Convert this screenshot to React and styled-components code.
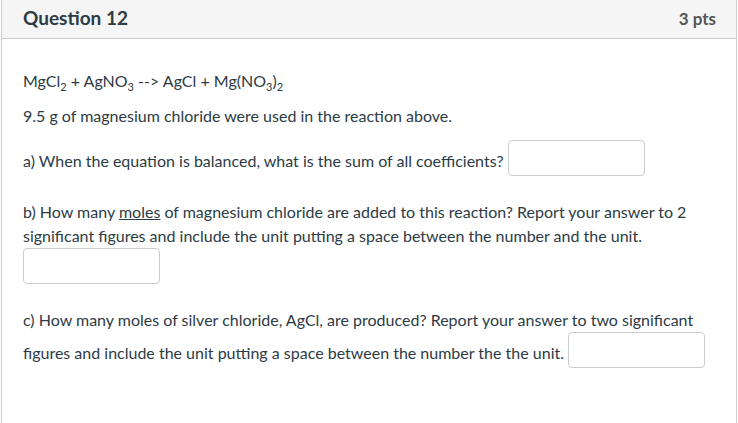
import React from "react";
import styled, { createGlobalStyle } from "styled-components";

const GlobalStyle = createGlobalStyle`
  body {
    margin: 0;
    background: #ffffff;
    font-family: Lato, "Open Sans", sans-serif;
    color: #2d3b45;
  }
`;

const Card = styled.div`
  margin-left: 1px;
  width: 734px;
  min-height: 440px;
  border: 1px solid #c7cdd1;
  border-top: none;
  box-sizing: content-box;
`;

const Header = styled.div`
  display: flex;
  align-items: center;
  justify-content: space-between;
  height: 38px;
  padding: 0 20px 0 21px;
  background: #f5f5f5;
  border-bottom: 1px solid #c7cdd1;
`;

const Title = styled.div`
  font-size: 19px;
  font-weight: 700;
  color: #2d3b45;
  margin-top: -3px;
`;

const Points = styled.div`
  font-size: 17px;
  font-weight: 700;
  color: #555555;
  margin-top: -2px;
`;

const Body = styled.div`
  padding: 30px 21px 0 21px;
  font-size: 16px;
`;

const Line = styled.p`
  margin: 0 0 ${(p) => p.$gap || 0}px 0;
  line-height: 24px;
`;

const Sub = styled.sub`
  font-size: 11px;
  line-height: 0;
  vertical-align: -4px;
`;

const Answer = styled.span`
  display: ${(p) => (p.$block ? "block" : "inline-block")};
  width: 135px;
  height: 34px;
  border: 1px solid #c7cdd1;
  border-radius: 4px;
  background: #fff;
  vertical-align: -9px;
  margin-left: ${(p) => (p.$block ? 0 : 4)}px;
`;

const Moles = styled.span`
  text-decoration: underline;
`;

export default function App() {
  return (
    <>
      <GlobalStyle />
      <Card>
        <Header>
          <Title>Question 12</Title>
          <Points>3 pts</Points>
        </Header>
        <Body>
          <Line $gap={11}>
            MgCl<Sub>2</Sub> + AgNO<Sub>3</Sub> --&gt; AgCl + Mg(NO<Sub>3</Sub>)<Sub>2</Sub>
          </Line>
          <Line $gap={12}>9.5 g of magnesium chloride were used in the reaction above.</Line>
          <Line $gap={24}>
            a) When the equation is balanced, what is the sum of all coefficients?
            <Answer />
          </Line>
          <Line>
            b) How many <Moles>moles</Moles> of magnesium chloride are added to this reaction? Report your answer to 2
            significant figures and include the unit putting a space between the number and the unit.
          </Line>
          <Answer $block />
          <Line style={{ marginTop: 24 }}>
            c) How many moles of silver chloride, AgCl, are produced? Report your answer to two significant
            figures and include the unit putting a space between the number the the unit.
            <Answer />
          </Line>
        </Body>
      </Card>
    </>
  );
}
